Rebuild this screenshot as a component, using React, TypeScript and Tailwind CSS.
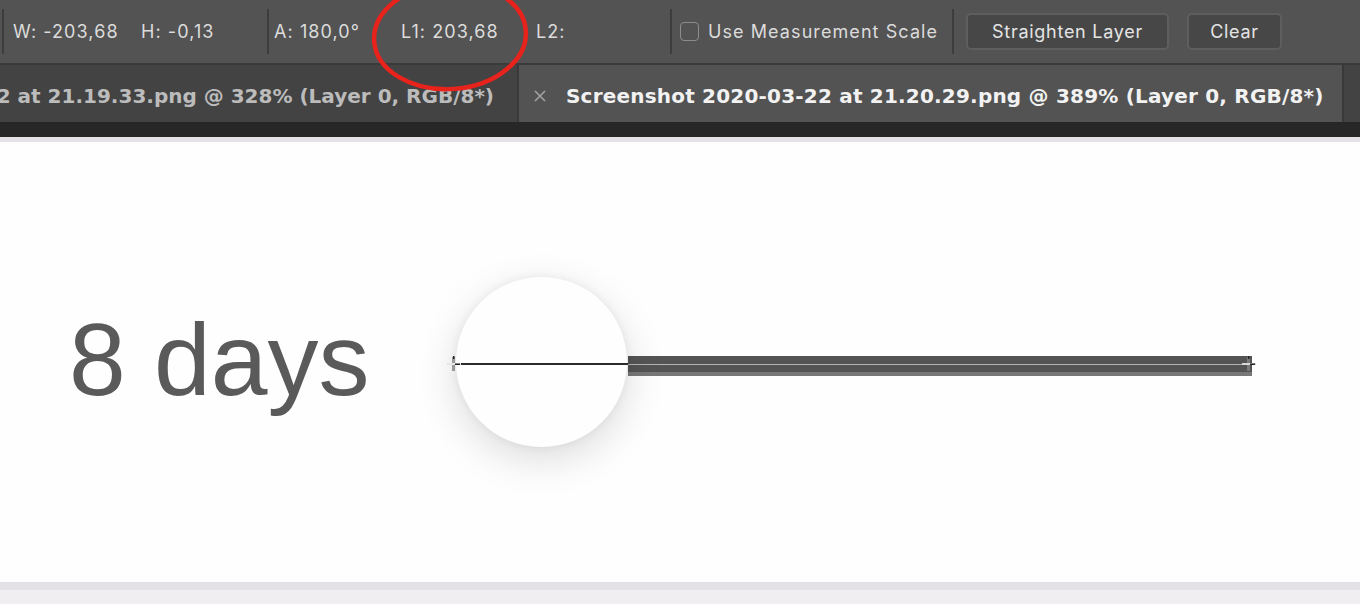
import React from 'react';

const uiFont = { fontFamily: 'Inter, "Liberation Sans", sans-serif' };
const tabFont = { fontFamily: '"DejaVu Sans", Verdana, sans-serif' };

const Separator = ({ className = '' }: { className?: string }) => (
  <div className={`w-[2px] h-[45px] bg-[#3d3d3d] shrink-0 ${className}`} />
);

const Field = ({ label, width, className = '' }: { label: string; width: string; className?: string }) => (
  <span className={`${width} shrink-0 whitespace-nowrap text-[18px] tracking-[0.06em] text-[#dcdcdc] ${className}`}>{label}</span>
);

const Crosshair = ({ dark = false }: { dark?: boolean }) => (
  <svg width="14" height="16" viewBox="0 0 14 16" className="block">
    <rect x="5" y="1" width="3" height="14" fill={dark ? '#7a7a7a' : '#9a9a9a'} />
    <rect x="0" y="7" width="14" height="2" fill={dark ? '#d8d8d8' : '#e6e6e6'} />
    <rect x="6" y="0" width="1.5" height="3" fill="#222" />
    <rect x="8" y="7.5" width="5" height="1.5" fill="#222" />
  </svg>
);

export default function App() {
  return (
    <div className="w-[1360px] h-[604px] overflow-hidden bg-[#f0eef1] relative">
      {/* options bar */}
      <div className="h-[65px] bg-[#535353] border-b-2 border-[#3a3a3a] flex items-center" style={uiFont}>
        <Separator className="ml-[2px]" />
        <Field label="W: -203,68" width="w-[128px]" className="ml-[9px]" />
        <Field label="H: -0,13" width="w-[126px]" />
        <Separator />
        <Field label="A: 180,0°" width="w-[127px]" className="ml-[5px]" />
        <Field label="L1: 203,68" width="w-[135px]" />
        <Field label="L2:" width="w-[134px]" />
        <Separator />
        <div className="ml-[8px] w-[19px] h-[19px] rounded-[4px] border-[1.5px] border-[#8c8c8c] shrink-0" />
        <Field label="Use Measurement Scale" width="w-[244px]" className="ml-[9px]" />
        <Separator />
        <button className="ml-[12px] w-[203px] h-[37px] rounded-[5px] bg-[#474747] border-2 border-[#5e5e5e] text-[18px] tracking-[0.04em] text-[#e4e4e4] shrink-0">
          Straighten Layer
        </button>
        <button className="ml-[18px] w-[95px] h-[37px] rounded-[5px] bg-[#474747] border-2 border-[#5e5e5e] text-[18px] tracking-[0.04em] text-[#e4e4e4] shrink-0">
          Clear
        </button>
      </div>

      {/* document tabs */}
      <div className="h-[57px] bg-[#434343] flex" style={tabFont}>
        <div className="w-[517px] shrink-0 overflow-hidden flex items-center justify-end pr-[23px] pt-[4px]">
          <span className="whitespace-nowrap text-[20px] font-bold text-[#bcbcbc]">
            Screenshot 2020-03-22 at 21.19.33.png @ 328% (Layer 0, RGB/8*)
          </span>
        </div>
        <div className="w-[2px] bg-[#393939] shrink-0" />
        <div className="w-[823px] shrink-0 bg-[#535353] flex items-center pt-[4px]">
          <svg width="12" height="12" viewBox="0 0 12 12" className="ml-[15px] shrink-0">
            <path d="M1 1 L11 11 M11 1 L1 11" stroke="#a3a3a3" strokeWidth="1.6" />
          </svg>
          <span className="ml-[20px] whitespace-nowrap text-[20px] tracking-[0.2px] font-bold text-[#f2f2f2]">
            Screenshot 2020-03-22 at 21.20.29.png @ 389% (Layer 0, RGB/8*)
          </span>
        </div>
        <div className="w-[2px] bg-[#393939] shrink-0" />
      </div>

      {/* dark strip and canvas */}
      <div className="h-[15px] bg-[#272727]" />
      <div className="h-[5px] bg-[#e4e2e6]" />
      <div className="h-[440px] bg-[#fefefe] pt-[135px]">
        <div className="flex items-center h-[170px]">
          <div
            className="w-[452px] shrink-0 pl-[69px] -mt-[4px] text-[102px] leading-none text-[#5a5a5a] whitespace-nowrap blur-[0.4px]"
            style={{ fontFamily: '"Liberation Sans", Arial, sans-serif' }}
          >
            8 days
          </div>
          <div className="relative w-[800px] h-[170px] flex items-center shrink-0">
            {/* track */}
            <div className="ml-[176px] mt-[8px] w-[624px] h-[20px] flex flex-col">
              <div className="h-[8px] bg-[#545454]" />
              <div className="h-[1px] bg-[#b4b4b4] mr-[8px]" />
              <div className="h-[7px] bg-[#545454]" />
              <div className="h-[4px] bg-[#787878]" />
            </div>
            {/* knob */}
            <div className="absolute left-[4px] top-0 w-[171px] h-[170px] rounded-full bg-[#fefefe] shadow-[0_12px_40px_rgba(0,0,0,0.14),0_0_10px_rgba(0,0,0,0.06)]" />
            {/* measuring line */}
            <div className="absolute left-[4px] top-[86px] w-[172px] h-[1.5px] bg-[#2b2b2b]" />
            <div className="absolute left-[-5px] top-[79px]">
              <Crosshair />
            </div>
            <div className="absolute left-[790px] top-[79px]">
              <Crosshair dark />
            </div>
          </div>
        </div>
      </div>
      <div className="h-[8px] bg-[#e3e1e5]" />

      {/* annotation */}
      <svg className="absolute left-0 top-0 pointer-events-none" width="1360" height="120">
        <ellipse cx="450" cy="36" rx="76" ry="53" fill="none" stroke="#e8231c" strokeWidth="4.5" transform="rotate(-4 450 36)" />
      </svg>
    </div>
  );
}
